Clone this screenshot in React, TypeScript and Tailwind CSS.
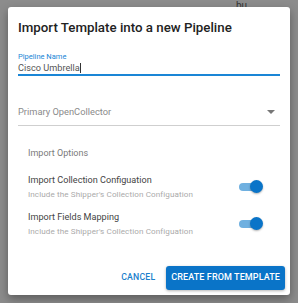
const Toggle = () => (
  <div className="relative w-[24px] h-[14px] shrink-0">
    <div className="absolute left-0 top-[3px] w-[20px] h-[8px] rounded-full bg-[#6fb0e0]" />
    <div className="absolute right-0 top-0 w-[13px] h-[13px] rounded-full bg-[#0a74c8] shadow-[0_1px_2px_rgba(0,0,0,0.3)]" />
  </div>
);

const options = [
  { title: "Import Collection Configuation", sub: "Include the Shipper's Collection Configuation" },
  { title: "Import Fields Mapping", sub: "Include the Shipper's Collection Configuation" },
];

export default function App() {
  return (
    <div
      className="relative w-[298px] h-[303px] bg-[#8c8c8c] overflow-hidden pt-[7px] px-[8px]"
      style={{ fontFamily: "Roboto, 'Liberation Sans', sans-serif" }}
    >
      <span className="absolute left-[236px] top-[1px] text-[10px] leading-[10px] text-[#333]">bu</span>

      <div className="relative flex flex-col h-[288px] bg-white rounded-[3px] shadow-[0_4px_10px_rgba(0,0,0,0.35)] px-[10px]">
        {/* Title */}
        <h2 className="mt-[12px] text-[13.3px] font-medium text-[#222] leading-[17px]">
          Import Template into a new Pipeline
        </h2>

        {/* Pipeline name field */}
        <div className="mt-[16px] border-b-2 border-[#1a86d6]">
          <div className="text-[7.5px] leading-[9px] text-[#1a86d6]">Pipeline Name</div>
          <div className="mt-[1px] text-[9.2px] leading-[12px] text-[#555]">
            Cisco Umbrella<span className="inline-block w-px h-[10px] bg-[#333] align-[-2px]" />
          </div>
        </div>

        {/* Collector select */}
        <div className="mt-[30px] flex items-center justify-between border-b border-[#cfcfcf] pb-[7px]">
          <span className="text-[9.3px] leading-[12px] text-[#8a8a8a]">Primary OpenCollector</span>
          <svg width="8" height="4" viewBox="0 0 8 4" className="mr-[5px]">
            <path d="M0 0 L8 0 L4 4 Z" fill="#777" />
          </svg>
        </div>

        {/* Import options */}
        <div className="px-[10px]">
          <div className="mt-[21px] text-[9px] leading-[12px] text-[#7a7a7a]">Import Options</div>
          <div className="mt-[15px] flex flex-col gap-[12px] pr-[7px]">
            {options.map((o) => (
              <div key={o.title} className="flex items-center justify-between">
                <div>
                  <div className="text-[9.1px] leading-[12px] text-[#444]">{o.title}</div>
                  <div className="mt-[3px] text-[8.1px] leading-[10px] text-[#aaa] tracking-[0.1px]">{o.sub}</div>
                </div>
                <Toggle />
              </div>
            ))}
          </div>
        </div>

        {/* Actions */}
        <div className="mt-auto mb-[5px] flex items-center justify-end gap-[11px] -mr-[5px]">
          <button className="text-[8.7px] font-medium text-[#1a7fcc] tracking-[0.2px]">CANCEL</button>
          <button className="h-[24px] px-[5px] rounded-[3px] bg-[#0a74c8] text-white text-[9px] font-medium tracking-[0.1px] shadow-[0_1px_3px_rgba(0,0,0,0.3)]">
            CREATE FROM TEMPLATE
          </button>
        </div>
      </div>
    </div>
  );
}
